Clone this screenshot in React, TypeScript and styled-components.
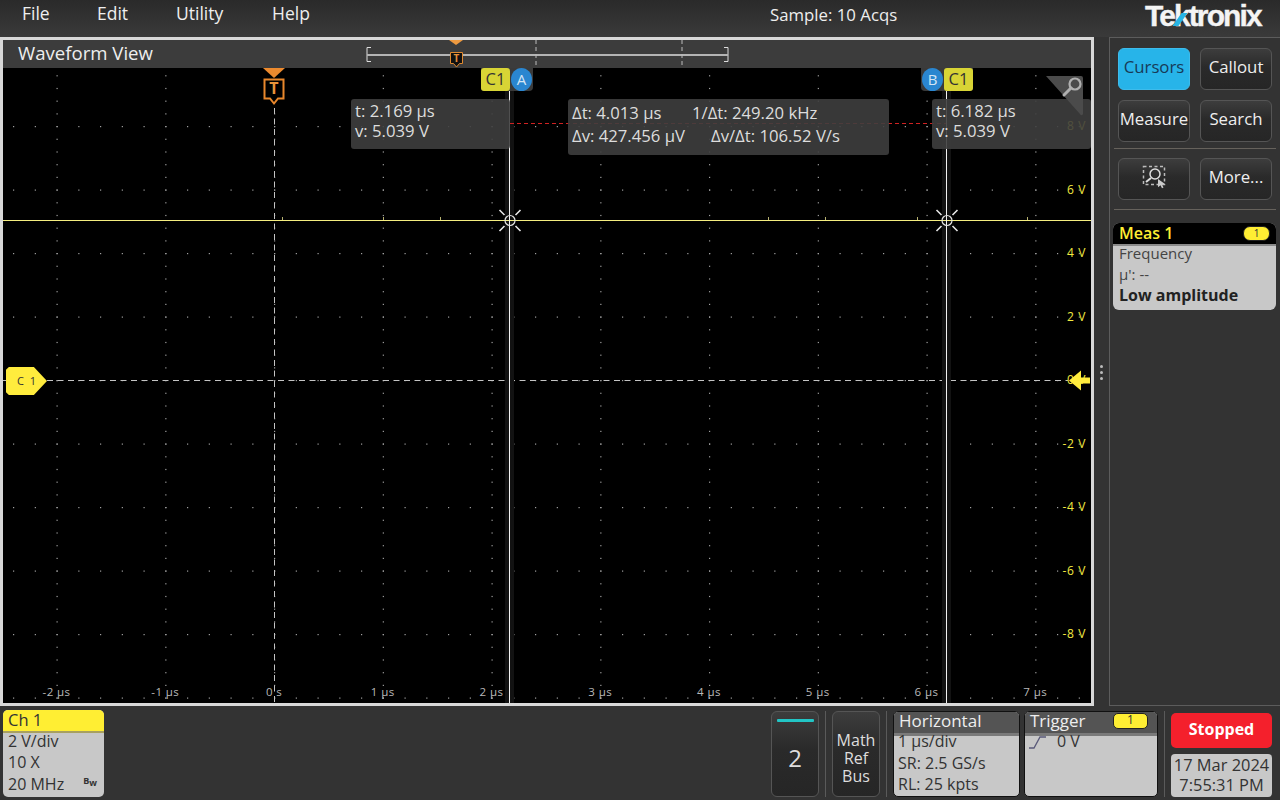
import styled, { createGlobalStyle } from 'styled-components'

const GlobalStyle = createGlobalStyle`
  html, body {
    margin: 0;
    padding: 0;
    background: #333;
  }
  body {
    font-family: 'Open Sans', 'Noto Sans', sans-serif;
    overflow: hidden;
  }
`

const Screen = styled.div`
  width: 1280px;
  height: 800px;
  display: flex;
  flex-direction: column;
  background: #333;
  color: #eee;
`

const TopBar = styled.header`
  height: 37px;
  flex: none;
  display: flex;
  align-items: center;
  background: linear-gradient(#2a2a2a, #3a3a3a);
  position: relative;
`
const Menu = styled.nav`
  display: flex;
  width: 360px;
  flex: none;
  padding-left: 22px;
  box-sizing: border-box;
  margin-top: -11px;
`
const MenuItem = styled.span<{ $w: number }>`
  width: ${(p) => p.$w}px;
  font-size: 17.5px;
  color: #eee;
`
const AcqStatus = styled.div`
  margin-left: 410px;
  font-size: 16.8px;
  color: #eee;
  margin-top: -9px;
`
const Logo = styled.div`
  position: absolute;
  left: 1145px;
  top: -1px;
  font-family: 'Liberation Sans', sans-serif;
  font-weight: 700;
  font-size: 30px;
  letter-spacing: -1.9px;
  -webkit-text-stroke: 0.4px #f4f4f4;
  color: #f4f4f4;
`
const LogoSlash = styled.i`
  position: absolute;
  left: 32px;
  top: 14px;
  width: 6px;
  height: 13px;
  background: #27b5e5;
  transform: skewX(-35deg);
`

const MainRow = styled.div`
  height: 669px;
  flex: none;
  display: flex;
`
const WavePanel = styled.section`
  width: 1094px;
  box-sizing: border-box;
  border: 3px solid #d8d8d8;
  display: flex;
  flex-direction: column;
`
const TitleBar = styled.div`
  height: 28px;
  flex: none;
  box-sizing: border-box;
  background: #3c3c3c;
  position: relative;
  display: flex;
  align-items: center;
  padding: 0 0 4px 15px;
  font-size: 18.6px;
  color: #eee;
`
const Overview = styled.svg`
  position: absolute;
  left: 0;
  top: 0;
`
const Plot = styled.div`
  flex: 1;
  position: relative;
  background: #000;
  overflow: hidden;
`
const Graticule = styled.svg`
  display: block;
`
const Readout = styled.div<{ $left: number; $w: number; $h: number; $line?: number }>`
  position: absolute;
  left: ${(p) => p.$left}px;
  top: 31px;
  width: ${(p) => p.$w}px;
  height: ${(p) => p.$h}px;
  box-sizing: border-box;
  padding: 2px 4px;
  background: rgba(62, 62, 62, 0.9);
  border-radius: 3px;
  font-size: 16.7px;
  line-height: ${(p) => p.$line ?? 20}px;
  color: #ddd;
  white-space: pre;
`
const ReadoutRow = styled.div`
  display: flex;
`
const ReadoutCell = styled.span<{ $w: number }>`
  width: ${(p) => p.$w}px;
  flex: none;
`
const CursorTag = styled.div<{ $left: number }>`
  position: absolute;
  left: ${(p) => p.$left}px;
  top: 0;
  height: 23px;
  display: flex;
  align-items: stretch;
  background: #3a3a3a;
  border-radius: 0 0 4px 4px;
`
const ChipC1 = styled.span`
  width: 29px;
  background: #d8d435;
  color: #333;
  border-radius: 3px;
  font-size: 16.5px;
  line-height: 21px;
  text-align: center;
`
const ChipAB = styled.span`
  width: 21px;
  margin: 0 1px;
  background: #2a86d0;
  color: #d4e6f5;
  border-radius: 50%;
  font-size: 15px;
  line-height: 23px;
  text-align: center;
`
const ZoomCorner = styled.svg`
  position: absolute;
  left: 1041px;
  top: 7px;
`
const MarkerSvg = styled.svg<{ $left: number; $top: number }>`
  position: absolute;
  left: ${(p) => p.$left}px;
  top: ${(p) => p.$top}px;
`
const ChannelFlag = styled.div`
  position: absolute;
  left: 3px;
  top: 299px;
  width: 41px;
  height: 28px;
  box-sizing: border-box;
  background: #ffec3d;
  clip-path: polygon(7% 0, 68% 0, 100% 50%, 68% 100%, 7% 100%, 0 90%, 0 10%);
  color: #333;
  font-size: 11px;
  line-height: 28px;
  letter-spacing: 1.5px;
  padding-left: 11px;
`

const SplitHandle = styled.div`
  width: 15px;
  flex: none;
  display: flex;
  flex-direction: column;
  justify-content: center;
  align-items: center;
  gap: 3px;
  margin-top: 2px;
`
const HandleDot = styled.i`
  width: 3px;
  height: 3px;
  border-radius: 50%;
  background: #bbb;
`
const SideBar = styled.aside`
  flex: 1;
  box-sizing: border-box;
  border-left: 1px solid #5c5c5c;
  border-top: 1px solid #5c5c5c;
  border-bottom: 1px solid #5c5c5c;
  padding: 10px 4px 0 3px;
  display: flex;
  flex-direction: column;
`
const ButtonGrid = styled.div`
  display: grid;
  grid-template-columns: 72px 72px;
  grid-auto-rows: 42px;
  gap: 10px;
  padding-left: 5px;
`
const SideButton = styled.div<{ $active?: boolean }>`
  display: flex;
  align-items: center;
  justify-content: center;
  box-sizing: border-box;
  padding-bottom: 5px;
  border-radius: 6px;
  border: 1px solid ${(p) => (p.$active ? '#3dbcec' : '#555')};
  background: ${(p) =>
    p.$active ? '#27b4e9' : 'linear-gradient(#3d3d3d, #2a2a2a 45%, #262626)'};
  color: ${(p) => (p.$active ? '#173a57' : '#eee')};
  font-size: 16.8px;
  white-space: nowrap;
`
const SideRule = styled.div<{ $top: number }>`
  height: 1px;
  background: #66625c;
  margin: ${(p) => p.$top}px 0 9px 1px;
`
const MeasBadge = styled.div`
  width: 163px;
  margin-top: 4px;
  padding-bottom: 4px;
  border-radius: 6px;
  overflow: hidden;
  background: #c8c8c8;
  color: #333;
  font-size: 15px;
  line-height: 21px;
`
const MeasHead = styled.div`
  height: 21px;
  margin-bottom: -3px;
  background: #000;
  color: #ffee33;
  font-weight: 600;
  font-size: 16px;
  display: flex;
  align-items: center;
  justify-content: space-between;
  padding: 0 6px;
  border-bottom: 2px solid #8a8a8a;
`
const Pill = styled.span`
  width: 25px;
  height: 13px;
  border-radius: 7px;
  background: #ffee33;
  border: 1px solid #222;
  color: #333;
  font-size: 10px;
  font-weight: 400;
  line-height: 13px;
  text-align: center;
`
const MeasLine = styled.div<{ $strong?: boolean }>`
  padding-left: 6px;
  font-size: ${(p) => (p.$strong ? 16 : 15)}px;
  font-weight: ${(p) => (p.$strong ? 700 : 400)};
  color: ${(p) => (p.$strong ? '#222' : '#444')};
`

const BottomBar = styled.footer`
  height: 94px;
  flex: none;
  display: flex;
  padding: 4px 8px 3px 3px;
  box-sizing: border-box;
`
const ChannelBadge = styled.div`
  width: 101px;
  border-radius: 5px;
  overflow: hidden;
  background: #c8c8c8;
  color: #333;
  font-size: 16px;
  line-height: 21.3px;
`
const ChannelHead = styled.div`
  height: 21px;
  margin-bottom: -2px;
  background: #ffee33;
  border-bottom: 2px solid #a8a060;
  padding-left: 5px;
  font-size: 16.5px;
  line-height: 20px;
`
const BadgeLine = styled.div`
  padding-left: 5px;
  position: relative;
`
const Bw = styled.span`
  position: absolute;
  right: 7px;
  top: 1px;
  font-size: 9px;
  font-weight: 700;
  line-height: 12px;
`
const Bwsub = styled.span`
  font-size: 9px;
  position: relative;
  top: 2px;
`
const Spacer = styled.div`
  width: 667px;
`
const AddButton = styled.div`
  width: 48px;
  box-sizing: border-box;
  margin-top: 1px;
  padding-top: 8px;
  border-radius: 6px;
  border: 1px solid #555;
  background: linear-gradient(#3d3d3d, #2a2a2a 45%, #262626);
  color: #ddd;
  display: flex;
  flex-direction: column;
  align-items: center;
  justify-content: center;
  font-size: 16px;
  line-height: 18px;
`
const CountButton = styled(AddButton)`
  justify-content: flex-start;
  padding-top: 7px;
`
const AddBar = styled.i`
  width: 37px;
  height: 3px;
  background: #22c5c5;
  border-radius: 1px;
  margin-bottom: 21px;
`
const AddCount = styled.span`
  font-size: 24px;
  line-height: 30px;
`
const BarRule = styled.div`
  width: 1px;
  margin: 1px 6px 0;
  background: #5a5a5a;
`
const StatusBadge = styled.div<{ $w: number; $gap?: number }>`
  width: ${(p) => p.$w}px;
  margin: 1px 0 0 ${(p) => p.$gap ?? 0}px;
  box-sizing: border-box;
  border: 1px solid #111;
  border-radius: 5px;
  overflow: hidden;
  background: #c8c8c8;
  color: #333;
  font-size: 16px;
  line-height: 21.5px;
`
const StatusHead = styled.div`
  height: 18px;
  margin-bottom: -5px;
  background: #545454;
  color: #eee;
  border-bottom: 3px solid #7a7a7a;
  padding: 0 6px 3px 5px;
  font-size: 17px;
  font-weight: 500;
  line-height: 18px;
  display: flex;
  justify-content: space-between;
  align-items: center;
`
const StatusPill = styled.span`
  width: 33px;
  height: 14px;
  border-radius: 5px;
  background: #ffee33;
  border: 1px solid #222;
  color: #333;
  font-size: 12px;
  font-weight: 400;
  line-height: 12px;
  text-align: center;
  margin-right: 3px;
`
const StatusLine = styled.div`
  padding-left: 4px;
  display: flex;
  align-items: center;
  gap: 10px;
`
const RunColumn = styled.div`
  width: 101px;
  display: flex;
  flex-direction: column;
  gap: 6px;
  padding-top: 3px;
`
const StopButton = styled.div`
  height: 35px;
  border-radius: 5px;
  background: #f4202c;
  color: #fff;
  font-weight: 700;
  font-size: 16px;
  line-height: 33px;
  text-align: center;
`
const DateBox = styled.div`
  flex: 1;
  border-radius: 4px;
  background: #c8c8c8;
  color: #333;
  font-size: 16.4px;
  line-height: 20px;
  text-align: center;
  padding-top: 1px;
  white-space: nowrap;
`

const X0 = 274
const Y0 = 380
const DIV_X = 108.75
const DIV_Y = 63.5
const PLOT_W = 1088
const PLOT_H = 635

function range(from: number, to: number) {
  return Array.from({ length: to - from + 1 }, (_, i) => from + i)
}

const DOTS: [number, number][] = []
range(-2, 7).forEach((col) => {
  range(-25, 25).forEach((k) => {
    DOTS.push([X0 + col * DIV_X, Y0 + (k * DIV_Y) / 5])
  })
})
range(-5, 5).forEach((row) => {
  range(-13, 38).forEach((k) => {
    DOTS.push([X0 + (k * DIV_X) / 5, Y0 + row * DIV_Y])
  })
})

const VOLTS = [8, 6, 4, 2, 0, -2, -4, -6, -8]
const TIMES = [-2, -1, 0, 1, 2, 3, 4, 5, 6, 7]
const SPIKES = [282, 383, 440, 768, 825, 917, 1027]

function CursorMark({ x }: { x: number }) {
  return (
    <g stroke="#e6e6e6" fill="none">
      <circle cx={x} cy={220.5} r={5} strokeWidth={1.2} />
      <path
        d={`M${x - 5.5} 215l-5 -5M${x + 5.5} 215l5 -5M${x - 5.5} 226l-5 5M${x + 5.5} 226l5 5`}
        strokeWidth={1.6}
      />
    </g>
  )
}

function GraticuleLayer() {
  return (
    <Graticule width={PLOT_W} height={PLOT_H} viewBox={`3 68 ${PLOT_W} ${PLOT_H}`}>
      {DOTS.map(([x, y], i) => (
        <rect key={i} x={x} y={y} width={1.2} height={1.2} fill="#a0a0a0" />
      ))}
      <path d="M3 380.500H6" stroke="#bbb" />
      <line x1={47} y1={380.5} x2={1068} y2={380.5} stroke="#c4c4c4" strokeDasharray="6 4.5" />
      <line x1={274.5} y1={108} x2={274.5} y2={703} stroke="#c4c4c4" strokeDasharray="6 4.5" />
      <rect x={505} y={91} width={9} height={612} fill="#121212" />
      <rect x={942} y={91} width={9} height={612} fill="#121212" />
      <rect x={510} y={123} width={436} height={1} fill="#000" />
      <line x1={510} y1={123.5} x2={946} y2={123.5} stroke="#d02222" strokeDasharray="4 3" />
      <line x1={3} y1={220.5} x2={1091} y2={220.5} stroke="#f5ee80" />
      {SPIKES.map((x) => (
        <line key={x} x1={x + 0.5} y1={217} x2={x + 0.5} y2={220} stroke="#b5b070" />
      ))}
      <line x1={509.5} y1={91} x2={509.5} y2={703} stroke="#f2f2f2" />
      <line x1={946.5} y1={91} x2={946.5} y2={703} stroke="#f2f2f2" />
      <CursorMark x={510} />
      <CursorMark x={947} />
      {VOLTS.map((v) => (
        <text
          key={v}
          x={1086}
          y={Y0 - (v / 2) * DIV_Y + 4}
          textAnchor="end"
          fill="#f2ea40"
          fontSize={12}
          fontFamily="Open Sans, sans-serif"
          letterSpacing={0.6}
        >
          {v} V
        </text>
      ))}
      {TIMES.map((t) => (
        <text
          key={t}
          x={X0 + t * DIV_X}
          y={696}
          textAnchor="middle"
          fill="#b8b8b8"
          fontSize={11.5}
          fontFamily="Open Sans, sans-serif"
          letterSpacing={0.4}
        >
          {t === 0 ? '0 s' : `${t} µs`}
        </text>
      ))}
      <path d="M1069 380.500L1081 370.500V377.500H1090V383.500H1081V390.500Z" fill="#ffec3d" />
    </Graticule>
  )
}

export default function App() {
  return (
    <Screen>
      <GlobalStyle />
      <TopBar>
        <Menu>
          <MenuItem $w={75}>File</MenuItem>
          <MenuItem $w={79}>Edit</MenuItem>
          <MenuItem $w={96}>Utility</MenuItem>
          <MenuItem $w={60}>Help</MenuItem>
        </Menu>
        <AcqStatus>Sample: 10 Acqs</AcqStatus>
        <Logo>
          Tektronix
          <LogoSlash />
        </Logo>
      </TopBar>

      <MainRow>
        <WavePanel>
          <TitleBar>
            Waveform View
            <Overview width={1088} height={28} viewBox="3 40 1088 28">
              <path d="M371 47.500h-4v14h4M724 47.500h4v14h-4" fill="none" stroke="#ddd" />
              <line x1={367} y1={55} x2={728} y2={55} stroke="#b4b4b4" strokeWidth={2} />
              <line x1={536} y1={40} x2={536} y2={68} stroke="#bbb" strokeDasharray="4 3" />
              <line x1={682} y1={40} x2={682} y2={68} stroke="#bbb" strokeDasharray="4 3" />
              <path d="M449 40h14l-7 5z" fill="#ee9a40" />
              <path d="M450.500 52.500h12v11h-3l-3 3.500-3 -3.500h-3z" fill="#111" stroke="#e08a30" />
              <text x={456.5} y={62} textAnchor="middle" fill="#e8923a" fontSize={10} fontWeight={700} fontFamily="Open Sans, sans-serif">
                T
              </text>
            </Overview>
          </TitleBar>
          <Plot>
            <GraticuleLayer />
            <MarkerSvg $left={260} $top={0} width={22} height={38} viewBox="0 0 22 38">
              <path d="M0 0h22l-11 10z" fill="#ec8a2e" />
              <path d="M1.500 11.500h19v19h-5.500l-4 5-4 -5h-5.500z" fill="#000" stroke="#e8872c" strokeWidth={2} />
              <text x={11} y={26} textAnchor="middle" fill="#e8923a" fontSize={16} fontWeight={700} fontFamily="Open Sans, sans-serif">
                T
              </text>
            </MarkerSvg>
            <ChannelFlag>C 1</ChannelFlag>
            <CursorTag $left={478}>
              <ChipC1>C1</ChipC1>
              <ChipAB>A</ChipAB>
            </CursorTag>
            <CursorTag $left={918}>
              <ChipAB>B</ChipAB>
              <ChipC1>C1</ChipC1>
            </CursorTag>
            <Readout $left={348} $w={159} $h={50}>
              {'t: 2.169 µs\nv: 5.039 V'}
            </Readout>
            <Readout $left={565} $w={321} $h={56} $line={23}>
              <ReadoutRow>
                <ReadoutCell $w={120}>Δt: 4.013 µs</ReadoutCell>
                1/Δt: 249.20 kHz
              </ReadoutRow>
              <ReadoutRow>
                <ReadoutCell $w={139}>Δv: 427.456 µV</ReadoutCell>
                Δv/Δt: 106.52 V/s
              </ReadoutRow>
            </Readout>
            <Readout $left={929} $w={159} $h={50}>
              {'t: 6.182 µs\nv: 5.039 V'}
            </Readout>
            <ZoomCorner width={42} height={44} viewBox="0 0 42 44">
              <path d="M2 1h35a2 2 0 0 1 2 2v35a1.500 1.500 0 0 1 -3 1z" fill="#4b4b4b" />
              <circle cx={31} cy={9} r={5.5} fill="none" stroke="#b0b0b0" strokeWidth={2.2} />
              <line x1={27} y1={13} x2={20} y2={20} stroke="#b0b0b0" strokeWidth={3} strokeLinecap="round" />
            </ZoomCorner>
          </Plot>
        </WavePanel>

        <SplitHandle>
          <HandleDot />
          <HandleDot />
          <HandleDot />
        </SplitHandle>

        <SideBar>
          <ButtonGrid>
            <SideButton $active>Cursors</SideButton>
            <SideButton>Callout</SideButton>
            <SideButton>Measure</SideButton>
            <SideButton>Search</SideButton>
          </ButtonGrid>
          <SideRule $top={6} />
          <ButtonGrid>
            <SideButton>
              <svg width={26} height={26} viewBox="0 0 26 26">
                <rect x={2.5} y={2.5} width={21} height={18} fill="none" stroke="#bbb" strokeDasharray="3 2.500" strokeWidth={1.5} />
                <circle cx={14} cy={10} r={5} fill="none" stroke="#ddd" strokeWidth={1.5} />
                <line x1={10} y1={14} x2={5} y2={18} stroke="#ddd" strokeWidth={2} />
                <path d="M17 15l7 5-3 .5 1.500 3-1.500 .8-1.500 -3-2.500 2z" fill="#ccc" />
              </svg>
            </SideButton>
            <SideButton>More...</SideButton>
          </ButtonGrid>
          <SideRule $top={9} />
          <MeasBadge>
            <MeasHead>
              Meas 1
              <Pill>1</Pill>
            </MeasHead>
            <MeasLine>Frequency</MeasLine>
            <MeasLine>µ': --</MeasLine>
            <MeasLine $strong>Low amplitude</MeasLine>
          </MeasBadge>
        </SideBar>
      </MainRow>

      <BottomBar>
        <ChannelBadge>
          <ChannelHead>Ch 1</ChannelHead>
          <BadgeLine>2 V/div</BadgeLine>
          <BadgeLine>10 X</BadgeLine>
          <BadgeLine>
            20 MHz
            <Bw>
              B<Bwsub>w</Bwsub>
            </Bw>
          </BadgeLine>
        </ChannelBadge>
        <Spacer />
        <CountButton>
          <AddBar />
          <AddCount>2</AddCount>
        </CountButton>
        <BarRule />
        <AddButton>
          <span>Math</span>
          <span>Ref</span>
          <span>Bus</span>
        </AddButton>
        <BarRule />
        <StatusBadge $w={127}>
          <StatusHead>Horizontal</StatusHead>
          <StatusLine>1 µs/div</StatusLine>
          <StatusLine>SR: 2.5 GS/s</StatusLine>
          <StatusLine>RL: 25 kpts</StatusLine>
        </StatusBadge>
        <StatusBadge $w={134} $gap={4}>
          <StatusHead>
            Trigger
            <StatusPill>1</StatusPill>
          </StatusHead>
          <StatusLine>
            <svg width={18} height={16} viewBox="0 0 18 16">
              <path d="M0 14h5l6 -11h6" fill="none" stroke="#5a5a7a" strokeWidth={1.3} />
            </svg>
            0 V
          </StatusLine>
        </StatusBadge>
        <BarRule />
        <RunColumn>
          <StopButton>Stopped</StopButton>
          <DateBox>
            17 Mar 2024
            <br />
            7:55:31 PM
          </DateBox>
        </RunColumn>
      </BottomBar>
    </Screen>
  )
}
